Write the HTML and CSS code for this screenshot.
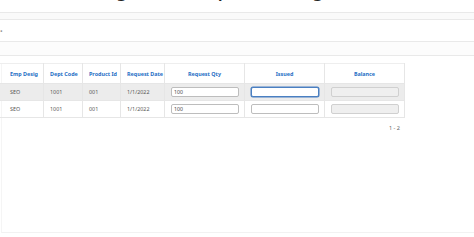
FILE: index.html
```
<!DOCTYPE html>
<html lang="en">

<head>
    <meta charset="UTF-8">
    <meta name="viewport" content="width=device-width, initial-scale=1.0">
    <title>Stock Request</title>
    <link rel="stylesheet" href="styles.css">
</head>

<body>
    <div class="title-bar">
        <h1>Manage Stock Request Issuing</h1>
    </div>
    <div class="tool-band"></div>
    <div class="filter-row"><span class="filter-mark">•</span></div>
    <div class="tool-band low"></div>

    <div class="grid-panel">
        <table class="grid">
            <colgroup>
                <col style="width: 45px">
                <col style="width: 39px">
                <col style="width: 38px">
                <col style="width: 44px">
                <col style="width: 80px">
                <col style="width: 80px">
                <col style="width: 80px">
            </colgroup>
            <thead>
                <tr>
                    <th>Emp Desig</th>
                    <th>Dept Code</th>
                    <th>Product Id</th>
                    <th>Request Date</th>
                    <th class="center">Request Qty</th>
                    <th class="center">Issued</th>
                    <th class="center">Balance</th>
                </tr>
            </thead>
            <tbody>
                <tr class="active">
                    <td>SEO</td>
                    <td>1001</td>
                    <td>001</td>
                    <td>1/1/2022</td>
                    <td><input class="cell-input" type="text" value="100"></td>
                    <td><input class="cell-input focused" type="text" value=""></td>
                    <td><input class="cell-input" type="text" value="" disabled></td>
                </tr>
                <tr>
                    <td>SEO</td>
                    <td>1001</td>
                    <td>001</td>
                    <td>1/1/2022</td>
                    <td><input class="cell-input" type="text" value="100"></td>
                    <td><input class="cell-input" type="text" value=""></td>
                    <td><input class="cell-input" type="text" value="" disabled></td>
                </tr>
            </tbody>
        </table>
        <div class="pager">1 - 2</div>
    </div>
</body>

</html>
```

FILE: styles.css
```
body {
    margin: 0;
    font-family: 'Noto Sans', 'Open Sans', sans-serif;
    color: #333;
    background-color: #fff;
    overflow: hidden;
}

.title-bar {
    height: 12px;
    overflow: hidden;
}

.title-bar h1 {
    margin: -18px 0 0 70px;
    font-size: 17px;
    line-height: 18px;
    font-weight: 600;
    color: #222;
}

.tool-band {
    height: 6px;
    border-top: 1px solid #e9e9e9;
    border-bottom: 1px solid #e9e9e9;
    background-color: #fafafa;
}

.tool-band.low {
    height: 13px;
    background-color: #fcfcfc;
}

.filter-row {
    height: 21px;
    position: relative;
}

.filter-mark {
    position: absolute;
    left: 0;
    top: 7px;
    font-size: 7px;
    color: #999;
}

.grid-panel {
    margin: 7px 0 0 1px;
    height: 169px;
    border-left: 1px solid #f5f5f5;
    border-bottom: 1px solid #f2f2f2;
}

.grid {
    margin-left: -4px;
    border-collapse: collapse;
    table-layout: fixed;
    width: 406px;
    font-size: 5.4px;
}

.grid th,
.grid td {
    border: 1px solid #e6e6e6;
    padding: 0 0 0 6px;
    text-align: left;
    white-space: nowrap;
    overflow: hidden;
}

.grid th:first-child,
.grid td:first-child {
    padding-left: 11px;
}

.grid th {
    height: 19px;
    color: #1f6fc5;
    font-weight: 700;
    border-top-color: #eeeeee;
}

.grid th.center {
    text-align: center;
    padding: 0;
}

.grid td {
    height: 16px;
    color: #555;
}

.grid tr.active td {
    background-color: #ececec;
}

.cell-input {
    display: block;
    box-sizing: border-box;
    width: 68px;
    height: 10px;
    padding: 0 2px;
    border: 1px solid #bdbdbd;
    border-radius: 2px;
    background-color: #fff;
    font-family: inherit;
    font-size: 5.2px;
    color: #444;
}

.cell-input.focused {
    border-color: #4a7fc1;
    box-shadow: 0 0 0 0.5px #4a7fc1;
}

.cell-input:disabled {
    background-color: #efefef;
    border-color: #d0d0d0;
}

.pager {
    width: 398px;
    margin-top: 6px;
    text-align: right;
    font-size: 5.6px;
    color: #666;
}
```
